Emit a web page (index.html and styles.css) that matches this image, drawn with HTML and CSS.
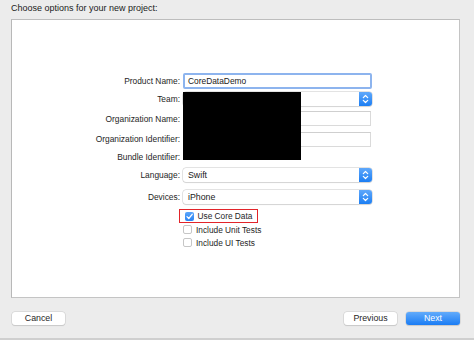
FILE: index.html
```html
<!DOCTYPE html>
<html>
<head>
<meta charset="utf-8">
<link rel="stylesheet" href="styles.css">
</head>
<body>
<div class="window">
  <div class="title">Choose options for your new project:</div>
  <div class="panel">
    <div class="form">
      <div class="label">Product Name:</div>
      <div class="cell"><div class="field focus">CoreDataDemo</div></div>

      <div class="label">Team:</div>
      <div class="cell"><div class="popup"><span class="val"></span><span class="stepper"><svg viewBox="0 0 13 14" width="13" height="14"><path d="M4.3 5.6 L6.5 3.5 L8.7 5.6 M4.3 8.4 L6.5 10.5 L8.7 8.4" fill="none" stroke="#fff" stroke-width="1.2" stroke-linecap="round" stroke-linejoin="round"/></svg></span></div></div>

      <div class="label">Organization Name:</div>
      <div class="cell"><div class="field plain"></div></div>

      <div class="label">Organization Identifier:</div>
      <div class="cell"><div class="field plain"></div></div>

      <div class="label">Bundle Identifier:</div>
      <div class="cell"></div>

      <div class="label">Language:</div>
      <div class="cell"><div class="popup"><span class="val">Swift</span><span class="stepper"><svg viewBox="0 0 13 14" width="13" height="14"><path d="M4.3 5.6 L6.5 3.5 L8.7 5.6 M4.3 8.4 L6.5 10.5 L8.7 8.4" fill="none" stroke="#fff" stroke-width="1.2" stroke-linecap="round" stroke-linejoin="round"/></svg></span></div></div>

      <div class="label">Devices:</div>
      <div class="cell"><div class="popup"><span class="val">iPhone</span><span class="stepper"><svg viewBox="0 0 13 14" width="13" height="14"><path d="M4.3 5.6 L6.5 3.5 L8.7 5.6 M4.3 8.4 L6.5 10.5 L8.7 8.4" fill="none" stroke="#fff" stroke-width="1.2" stroke-linecap="round" stroke-linejoin="round"/></svg></span></div></div>

      <div class="label"></div>
      <div class="cell"><div class="check hl"><span class="box on"><svg viewBox="0 0 9 9" width="9" height="9"><path d="M2 4.6 L3.8 6.5 L7.2 2.3" fill="none" stroke="#fff" stroke-width="1.3" stroke-linecap="round" stroke-linejoin="round"/></svg></span><span>Use Core Data</span></div></div>

      <div class="label"></div>
      <div class="cell"><div class="check"><span class="box"></span><span>Include Unit Tests</span></div></div>

      <div class="label"></div>
      <div class="cell"><div class="check"><span class="box"></span><span>Include UI Tests</span></div></div>
    </div>
    <div class="redact"></div>
  </div>
  <div class="footer">
    <button class="btn">Cancel</button>
    <div class="right">
      <button class="btn">Previous</button>
      <button class="btn primary">Next</button>
    </div>
  </div>
</div>
</body>
</html>
```

FILE: styles.css
```css
html, body {
  margin: 0;
  padding: 0;
}
body {
  width: 474px;
  height: 340px;
  background: #ececec;
  font-family: "Liberation Sans", Arial, sans-serif;
  color: #1e1e1e;
  overflow: hidden;
}
.window {
  height: 338px;
  border-bottom: 2px solid #cfcfcf;
  box-sizing: content-box;
}
.title {
  font-size: 9px;
  line-height: 11px;
  padding: 3px 0 0 11px;
  height: 16px;
  box-sizing: border-box;
  color: #1a1a1a;
}
.panel {
  position: relative;
  margin: 3px 14px 0 11px;
  height: 279px;
  box-sizing: border-box;
  background: #fff;
  border: 1px solid #c4c4c4;
  border-top-color: #bdbdbd;
  border-left-color: #b8b8b8;
}
.form {
  display: grid;
  grid-template-columns: 168px 189px;
  column-gap: 3px;
  grid-template-rows: 18px 18px 21px 20px 16px 19px 25px 14px 13px 13px;
  padding-top: 52px;
  font-size: 8.4px;
}
.label {
  display: flex;
  align-items: center;
  justify-content: flex-end;
  color: #1e1e1e;
}
.cell {
  display: flex;
  align-items: center;
}
.field {
  box-sizing: border-box;
  width: 100%;
  background: #fff;
  display: flex;
  align-items: center;
}
.field.focus {
  height: 16px;
  border: 2px solid #8db4ee;
  border-radius: 2px;
  padding-left: 3px;
  color: #1a1a1a;
}
.field.plain {
  height: 15px;
  width: 188px;
  border: 1px solid #dadada;
  border-top-color: #cfcfcf;
}
.popup {
  box-sizing: border-box;
  width: 189px;
  height: 14px;
  display: flex;
  align-items: center;
  background: #fff;
  border-radius: 3px;
  box-shadow: 0 0 0 0.5px #c8c8c8, 0 1px 1px rgba(0,0,0,0.12);
}
.popup .val {
  flex: 1;
  padding-left: 5px;
  font-size: 8.8px;
  color: #1a1a1a;
}
.stepper {
  width: 13px;
  height: 14px;
  border-radius: 0 3px 3px 0;
  background: linear-gradient(#5fa8fb, #1c7ef3);
  display: flex;
}
.check {
  display: flex;
  align-items: center;
  gap: 4px;
  font-size: 8.3px;
  color: #1e1e1e;
}
.check.hl {
  border: 1.5px solid #e2242a;
  margin-left: -4px;
  padding: 1px 5px 1px 4.5px;
  height: 14px;
  box-sizing: border-box;
}
.box {
  width: 9px;
  height: 9px;
  box-sizing: border-box;
  border: 1px solid #c6c6c6;
  border-radius: 2px;
  background: #fff;
  display: flex;
}
.box.on {
  border: none;
  background: linear-gradient(#5ba6fb, #2a83f3);
}
.redact {
  position: absolute;
  left: 171px;
  top: 72px;
  width: 118px;
  height: 68px;
  background: #000;
}
.footer {
  display: flex;
  justify-content: space-between;
  padding: 14px 14px 0 12px;
}
.right {
  display: flex;
  gap: 9px;
}
.btn {
  font-family: "Liberation Sans", Arial, sans-serif;
  font-size: 8.8px;
  height: 13px;
  width: 54px;
  padding: 0;
  border: none;
  border-radius: 3px;
  background: #fff;
  color: #1e1e1e;
  box-shadow: 0 0 0 0.5px #c9c9c9, 0 1px 1px rgba(0,0,0,0.15);
  line-height: 13px;
}
.btn:first-child {
  width: 53px;
}
.btn.primary {
  background: linear-gradient(#62abfb, #1a7cf4);
  color: #fff;
}
```
